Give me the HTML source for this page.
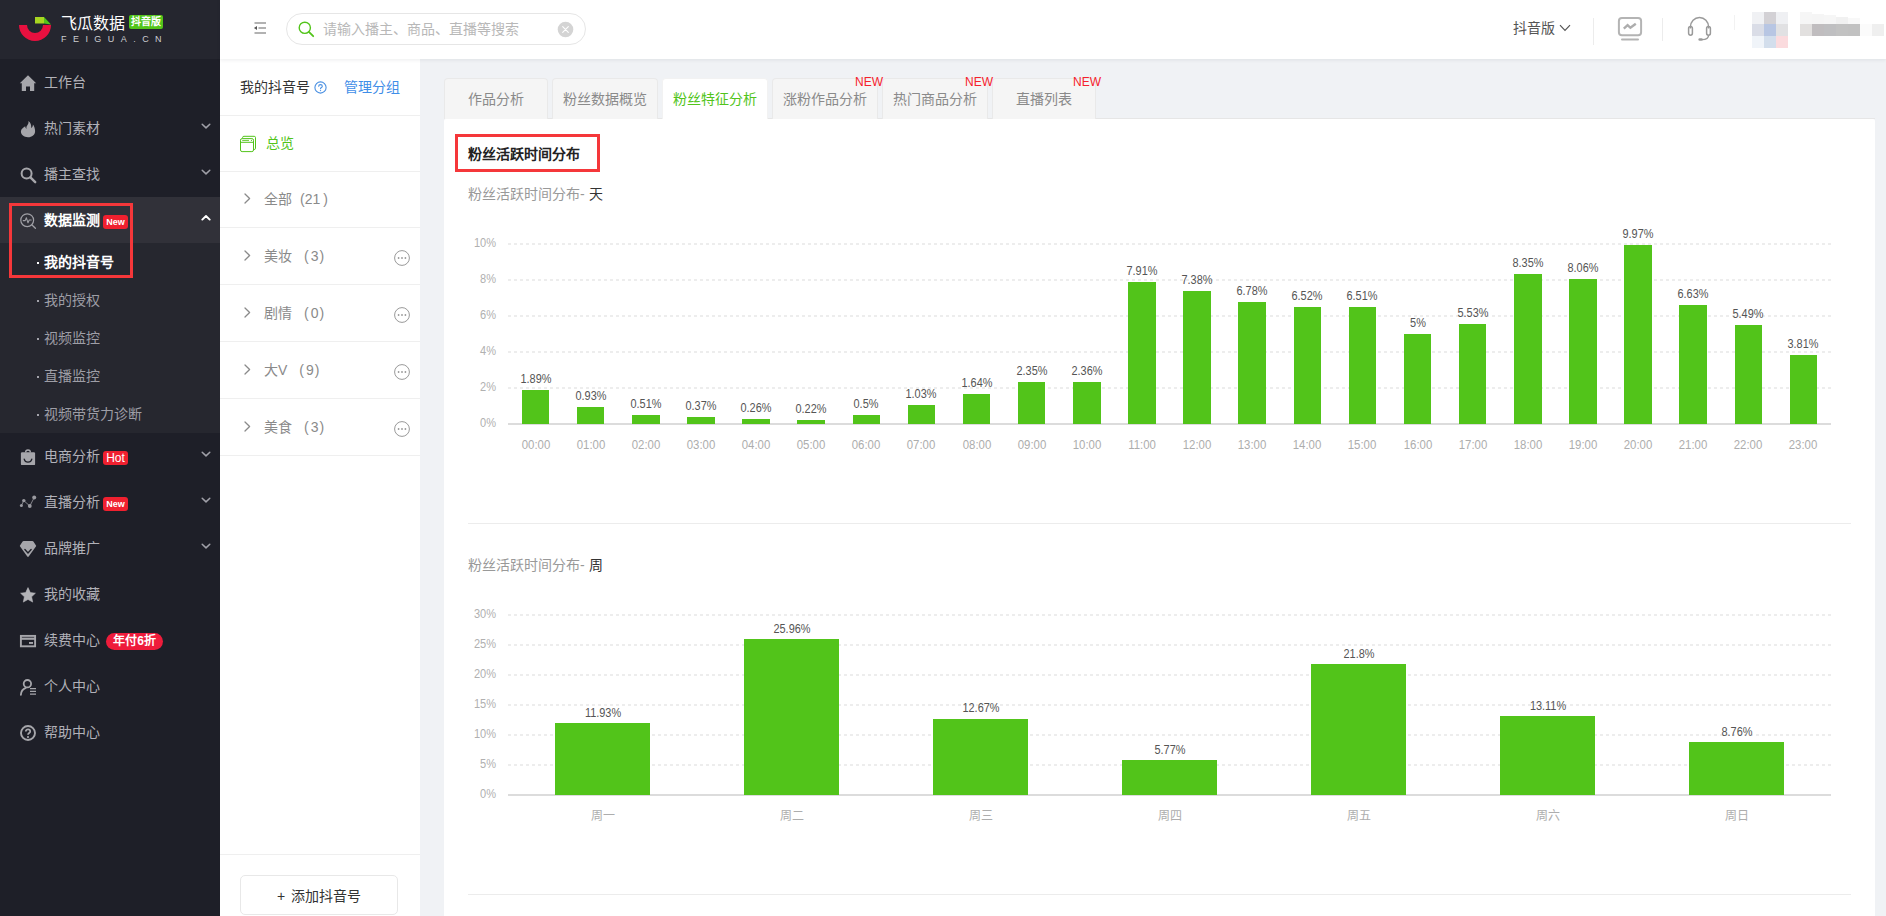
<!DOCTYPE html>
<html lang="zh-CN">
<head>
<meta charset="utf-8">
<title>飞瓜数据</title>
<style>
*{box-sizing:border-box;margin:0;padding:0}
html,body{width:1886px;height:916px;overflow:hidden;background:#f0f2f5;font-family:"Liberation Sans",sans-serif;font-size:14px;color:#333}
.abs{position:absolute}
#page{position:relative;width:1886px;height:916px;overflow:hidden}
/* sidebar */
#side{position:absolute;left:0;top:0;width:220px;height:916px;background:#1e1f28}
#logo{position:absolute;left:0;top:0;width:220px;height:59px;background:#25262f}
.mi{position:absolute;left:0;width:220px;height:46px;color:#b1b1b8;font-size:14px;line-height:46px}
.mi .t{position:absolute;left:44px;top:0;white-space:nowrap}
.mi svg.ic{position:absolute;left:20px;top:16px;width:16px;height:16px}
.mi svg.ch{position:absolute;left:201px;top:18px;width:10px;height:7px}
.mi.act{background:#313139;color:#fff;font-weight:bold}
.sub{position:absolute;left:0;width:220px;height:38px;color:#9e9ea6;font-size:14px;line-height:38px;background:#26272f}
.sub .t{position:absolute;left:44px;top:0;white-space:nowrap}
.sub .d{position:absolute;left:37px;top:19px;width:2px;height:2px;background:#a3a3ab}
.sub.on{color:#fff;font-weight:bold}
.sub.on .d{background:#fff}
.bdg{position:absolute;top:16px;height:14px;line-height:14px;border-radius:3px;background:#f0202f;color:#fff;font-size:10px;font-weight:bold;text-align:center}
/* header */
#head{position:absolute;left:220px;top:0;width:1666px;height:59px;background:#fff;box-shadow:0 1px 4px rgba(0,21,41,.08);z-index:5}
/* mid panel */
#mid{position:absolute;left:220px;top:59px;width:200px;height:857px;background:#fff}
.ln{position:absolute;left:0;width:200px;height:1px;background:#efefef}
.grp{position:absolute;left:44px;font-size:14px;color:#8a8a8a;white-space:nowrap;line-height:20px}
.grp i{font-style:normal}
.cv{position:absolute;left:24px;width:7px;height:11px}
.dots{position:absolute;left:174px;width:16px;height:16px}
/* content */
#main{position:absolute;left:444px;top:119px;width:1431px;height:800px;background:#fff;border-radius:2px}
.tab{position:absolute;top:78px;height:41px;width:104px;background:#f5f5f5;border:1px solid #e9e9e9;border-bottom:none;border-radius:4px 4px 0 0;color:#8a8a8a;font-size:14px;line-height:40px;text-align:center;white-space:nowrap}
.tab.on{background:#fff;color:#52c41a;border-color:#f2f2f2;height:42px}
.new{position:absolute;top:75px;font-size:12px;color:#f5222d;line-height:14px}
.yl{position:absolute;left:446px;width:50px;text-align:right;font-size:12px;line-height:16px;color:#b0b0b0;transform:scaleX(.92);transform-origin:100% 50%}
.gl{position:absolute;height:2px;background:repeating-linear-gradient(90deg,#ededed 0,#ededed 3px,transparent 3px,transparent 6px)}
.ax{position:absolute;height:2px;background:#dcdcdc}
.bar{position:absolute;background:#52c41a}
.vl{position:absolute;width:80px;text-align:center;font-size:12px;line-height:16px;color:#555;white-space:nowrap;transform:scaleX(.91)}
.xl{position:absolute;width:80px;text-align:center;font-size:12px;line-height:16px;color:#adadad;white-space:nowrap}
.xl.num{transform:scaleX(.95)}
.hr{position:absolute;left:468px;width:1383px;height:1px;background:#ececec}
.st{position:absolute;left:468px;font-size:14px;line-height:20px;color:#999;white-space:nowrap}
.st b{font-weight:normal;color:#333}
</style>
</head>
<body>
<div id="page">

<!-- ============ SIDEBAR ============ -->
<div id="side">
  <div id="logo">
    <svg class="abs" style="left:18px;top:15px" width="36" height="28" viewBox="0 0 36 28">
      <path d="M1 10 A16 16 0 0 0 33 10 L25 10 A8 8 0 0 1 9 10 Z" fill="#e8103f"/>
      <path d="M17 2 L26 2 L26 8.5 L17 8.5 Z" fill="#a8d521"/>
      <path d="M26 2 L33 9.5 L26 8.5 Z" fill="#52c41a"/>
    </svg>
    <div class="abs" style="left:61px;top:13px;font-size:16px;line-height:22px;color:#fff;white-space:nowrap">飞瓜数据</div>
    <div class="abs" style="left:129px;top:15px;width:34px;height:14px;border-radius:2px;background:#52c41a;color:#fff;font-size:10px;font-weight:bold;line-height:14px;text-align:center;white-space:nowrap">抖音版</div>
    <div class="abs" style="left:61px;top:34px;font-size:9px;line-height:10px;color:#cdcdd0;letter-spacing:6.45px;white-space:nowrap">FEIGUA.CN</div>
  </div>

  <div class="mi " style="top:59px"><svg class="ic" viewBox="0 0 16 16" style="overflow:visible"><path d="M8 0.3 L16.2 8.2 L14.2 8.2 L14.2 16 L10 16 L10 11.4 L6 11.4 L6 16 L1.8 16 L1.8 8.2 L-0.2 8.2 Z" fill="#a6a6ab"/></svg><span class="t">工作台</span></div>
<div class="mi " style="top:105px"><svg class="ic" viewBox="0 0 16 16" style="overflow:visible"><path d="M8.3 0 C9.2 2.6 7.2 4.2 6.6 5.4 C6.2 6.3 6.3 7.3 6.9 8 C6.0 7.6 5.3 6.7 5.2 5.3 C3.4 6.4 0.9 8.2 0.9 10.6 C0.9 13.8 4 16.2 8 16.2 C12 16.2 15.1 13.8 15.1 10.2 C15.1 7.4 14.2 5 12.9 3.4 C12.9 5.2 12.2 6.5 11.2 7 C11.6 4.2 10.6 1.4 8.3 0 Z" fill="#a6a6ab"/></svg><span class="t">热门素材</span><svg class="ch" viewBox="0 0 10 7"><path d="M1.2 1.2 L5 4.9 L8.8 1.2" fill="none" stroke="#a0a0a8" stroke-width="1.5" stroke-linecap="round" stroke-linejoin="round"/></svg></div>
<div class="mi " style="top:151px"><svg class="ic" viewBox="0 0 16 16" style="overflow:visible"><circle cx="6.6" cy="6.6" r="5" fill="none" stroke="#a6a6ab" stroke-width="2"/><path d="M10.4 10.4 L15.2 15.2" stroke="#a6a6ab" stroke-width="2.4" stroke-linecap="round"/></svg><span class="t">播主查找</span><svg class="ch" viewBox="0 0 10 7"><path d="M1.2 1.2 L5 4.9 L8.8 1.2" fill="none" stroke="#a0a0a8" stroke-width="1.5" stroke-linecap="round" stroke-linejoin="round"/></svg></div>
<div class="mi act" style="top:197px"><svg class="ic" viewBox="0 0 16 16" style="overflow:visible"><circle cx="7.2" cy="7.2" r="6.4" fill="none" stroke="#a0a0a6" stroke-width="1.2"/><path d="M12 12 L15.4 15.2" stroke="#a0a0a6" stroke-width="1.3" stroke-linecap="round"/><path d="M3.2 7.6 L5.2 7.6 L6.4 4.8 L8 9.8 L9.2 7 L11.2 7" fill="none" stroke="#a0a0a6" stroke-width="1.1" stroke-linejoin="round" stroke-linecap="round"/></svg><span class="t">数据监测</span><span class="bdg" style="left:103px;top:18px;width:25px;font-size:9px">New</span><svg class="ch" style="top:17px" viewBox="0 0 10 7"><path d="M1.3 5.6 L5 2 L8.7 5.6" fill="none" stroke="#fff" stroke-width="1.9" stroke-linecap="round" stroke-linejoin="round"/></svg></div>
<div class="sub on" style="top:243px"><span class="d"></span><span class="t">我的抖音号</span></div>
<div class="sub" style="top:281px"><span class="d"></span><span class="t">我的授权</span></div>
<div class="sub" style="top:319px"><span class="d"></span><span class="t">视频监控</span></div>
<div class="sub" style="top:357px"><span class="d"></span><span class="t">直播监控</span></div>
<div class="sub" style="top:395px"><span class="d"></span><span class="t">视频带货力诊断</span></div>
<div class="mi " style="top:433px"><svg class="ic" viewBox="0 0 16 16" style="overflow:visible"><path d="M5.6 3.6 A2.4 2.6 0 0 1 10.4 3.6" fill="none" stroke="#a6a6ab" stroke-width="1.3"/><rect x="0.9" y="3.3" width="14.2" height="12.8" rx="1.2" fill="#a6a6ab"/><path d="M4.2 10.1 A3.9 3.9 0 0 0 11.8 10.1" fill="none" stroke="#1e1f28" stroke-width="1.3" stroke-linecap="round"/></svg><span class="t">电商分析</span><span class="bdg" style="left:103px;top:18px;width:25px;font-size:12px;font-weight:normal">Hot</span><svg class="ch" viewBox="0 0 10 7"><path d="M1.2 1.2 L5 4.9 L8.8 1.2" fill="none" stroke="#a0a0a8" stroke-width="1.5" stroke-linecap="round" stroke-linejoin="round"/></svg></div>
<div class="mi " style="top:479px"><svg class="ic" viewBox="0 0 16 16" style="overflow:visible"><path d="M1.4 10.6 L3.8 5.6 L9.8 11 L14.2 2.6" fill="none" stroke="#8f8f95" stroke-width="0.9"/><circle cx="1.4" cy="10.6" r="1.5" fill="#9a9aa0"/><circle cx="3.8" cy="5.6" r="1.7" fill="#9a9aa0"/><circle cx="9.8" cy="11" r="1.9" fill="#9a9aa0"/><circle cx="14.2" cy="2.6" r="2" fill="#9a9aa0"/></svg><span class="t">直播分析</span><span class="bdg" style="left:103px;top:18px;width:25px;font-size:9px">New</span><svg class="ch" viewBox="0 0 10 7"><path d="M1.2 1.2 L5 4.9 L8.8 1.2" fill="none" stroke="#a0a0a8" stroke-width="1.5" stroke-linecap="round" stroke-linejoin="round"/></svg></div>
<div class="mi " style="top:525px"><svg class="ic" viewBox="0 0 16 16" style="overflow:visible"><path d="M3.6 0 L12.4 0 Q13 0 13.4 0.5 L16 4.4 Q16.4 5 15.9 5.6 L8.7 15.6 Q8 16.4 7.3 15.6 L0.1 5.6 Q-0.4 5 0 4.4 L2.6 0.5 Q3 0 3.6 0 Z" fill="#a6a6ab"/><path d="M4.9 8.6 L8 11.9 L11.1 8.6" fill="none" stroke="#1e1f28" stroke-width="1.4" stroke-linecap="round" stroke-linejoin="round"/></svg><span class="t">品牌推广</span><svg class="ch" viewBox="0 0 10 7"><path d="M1.2 1.2 L5 4.9 L8.8 1.2" fill="none" stroke="#a0a0a8" stroke-width="1.5" stroke-linecap="round" stroke-linejoin="round"/></svg></div>
<div class="mi " style="top:571px"><svg class="ic" viewBox="0 0 16 16" style="overflow:visible"><path d="M8 0.6 L10.3 5.6 L15.4 6.2 L11.6 9.8 L12.7 15.1 L8 12.4 L3.3 15.1 L4.4 9.8 L0.6 6.2 L5.7 5.6 Z" fill="#b4b4b8" stroke="#b4b4b8" stroke-width="0.6" stroke-linejoin="round"/></svg><span class="t">我的收藏</span></div>
<div class="mi " style="top:617px"><svg class="ic" viewBox="0 0 16 16" style="overflow:visible"><rect x="0.9" y="2.9" width="14.2" height="10.4" fill="none" stroke="#a6a6ab" stroke-width="1.9"/><rect x="0.7" y="4.6" width="14.6" height="2.2" fill="#a6a6ab"/><rect x="9" y="9" width="4" height="1.9" fill="#a6a6ab"/></svg><span class="t">续费中心</span><span class="bdg" style="left:106px;top:16px;width:57px;height:17px;line-height:17px;border-radius:9px;font-size:12px;background:#ee1c3b">年付6折</span></div>
<div class="mi " style="top:663px"><svg class="ic" viewBox="0 0 16 16" style="overflow:visible"><circle cx="7.4" cy="4.7" r="3.7" fill="none" stroke="#a6a6ab" stroke-width="1.8"/><path d="M0.9 15.8 C1.1 12.4 3 9.8 5.8 8.8" fill="none" stroke="#a6a6ab" stroke-width="1.8" stroke-linecap="round"/><path d="M10 9.6 H16 M10 12.4 H16 M10 15.2 H16" stroke="#a6a6ab" stroke-width="1.2"/></svg><span class="t">个人中心</span></div>
<div class="mi " style="top:709px"><svg class="ic" viewBox="0 0 16 16" style="overflow:visible"><circle cx="8" cy="8" r="7" fill="none" stroke="#a6a6ab" stroke-width="1.9"/><path d="M5.8 6.4 C5.8 3.7 10.2 3.7 10.2 6.4 C10.2 8 8 8 8 9.8" fill="none" stroke="#a6a6ab" stroke-width="1.8" stroke-linecap="butt"/><circle cx="8" cy="12.1" r="1.05" fill="#a6a6ab"/></svg><span class="t">帮助中心</span></div>

  <!-- red annotation box -->
  <div class="abs" style="left:9px;top:203px;width:124px;height:75px;border:3px solid #f5373a"></div>
</div>

<!-- ============ HEADER ============ -->
<div id="head">
  <svg class="abs" style="left:33px;top:21px" width="14" height="14" viewBox="0 0 14 14"><path d="M1.5 2 H13 M5.5 7 H13 M1.5 12 H13" stroke="#666" stroke-width="1.1"/><path d="M1 7 L4 4.9 L4 9.1 Z" fill="#555"/></svg>
<div class="abs" style="left:66px;top:13px;width:300px;height:32px;border:1px solid #e6e6e6;border-radius:16px;background:#fff"></div>
<svg class="abs" style="left:78px;top:21px" width="17" height="17" viewBox="0 0 17 17"><circle cx="6.8" cy="6.8" r="5.6" fill="none" stroke="#52c41a" stroke-width="1.4"/><path d="M10.9 10.9 L15.2 15.2" stroke="#52c41a" stroke-width="1.8" stroke-linecap="round"/></svg>
<div class="abs" style="left:103px;top:18px;font-size:14px;line-height:22px;color:#b8b8b8;white-space:nowrap">请输入播主、商品、直播等搜索</div>
<svg class="abs" style="left:337px;top:21px" width="17" height="17" viewBox="0 0 17 17"><circle cx="8.5" cy="8.5" r="7.8" fill="#d4d4d4"/><path d="M5.7 5.7 L11.3 11.3 M11.3 5.7 L5.7 11.3" stroke="#fff" stroke-width="1.1" stroke-linecap="round"/></svg>
<div class="abs" style="left:1293px;top:17px;font-size:14px;line-height:22px;color:#555;white-space:nowrap">抖音版</div>
<svg class="abs" style="left:1339px;top:24px" width="12" height="8" viewBox="0 0 12 8"><path d="M1 1.2 L6 6.4 L11 1.2" fill="none" stroke="#555" stroke-width="1.2"/></svg>
<div class="abs" style="left:1373px;top:18px;width:1px;height:27px;background:#ececec"></div>
<svg class="abs" style="left:1397px;top:16px" width="26" height="26" viewBox="0 0 26 26"><rect x="1.9" y="1.9" width="22.2" height="17.4" rx="3" fill="none" stroke="#b4b4b4" stroke-width="2"/><path d="M5 23.6 H21" stroke="#b4b4b4" stroke-width="2" stroke-linecap="round"/><path d="M6.8 12.6 L10.6 9.2 L13.4 11.8 L18.8 7.8" fill="none" stroke="#adadad" stroke-width="2.4" stroke-linejoin="miter" stroke-linecap="butt"/></svg>
<div class="abs" style="left:1442px;top:18px;width:1px;height:23px;background:#ececec"></div>
<svg class="abs" style="left:1466px;top:15px" width="27" height="27" viewBox="0 0 27 27"><path d="M4.4 13.6 V12 A9.1 9.6 0 0 1 22.6 12 V13.6" fill="none" stroke="#9a9a9a" stroke-width="1.5"/><rect x="2.6" y="11.4" width="3.8" height="8.8" rx="1.9" fill="none" stroke="#9a9a9a" stroke-width="1.5"/><rect x="20.6" y="11.4" width="3.8" height="8.8" rx="1.9" fill="none" stroke="#9a9a9a" stroke-width="1.5"/><path d="M22.6 20.2 C22.6 23.4 19.6 24.6 16 24.6" fill="none" stroke="#9a9a9a" stroke-width="1.4"/><rect x="12.4" y="23.2" width="4.4" height="2.6" rx="1.3" fill="#9a9a9a"/></svg>
<div class="abs" style="left:1514px;top:15px;width:1px;height:15px;background:#f2f2f2"></div>
<div class="abs" style="left:1532px;top:12px;width:12px;height:12px;background:#f0f1f4"></div>
<div class="abs" style="left:1544px;top:12px;width:12px;height:12px;background:#d3d1d5"></div>
<div class="abs" style="left:1556px;top:12px;width:12px;height:12px;background:#eff0f3"></div>
<div class="abs" style="left:1532px;top:24px;width:12px;height:12px;background:#dadde7"></div>
<div class="abs" style="left:1544px;top:24px;width:12px;height:12px;background:#b8c6e3"></div>
<div class="abs" style="left:1556px;top:24px;width:12px;height:12px;background:#e1e1e3"></div>
<div class="abs" style="left:1532px;top:36px;width:12px;height:12px;background:#f0f4f9"></div>
<div class="abs" style="left:1544px;top:36px;width:12px;height:12px;background:#d3deec"></div>
<div class="abs" style="left:1556px;top:36px;width:12px;height:12px;background:#fbdbde"></div>
<div class="abs" style="left:1580px;top:24px;width:12px;height:12px;background:#e2e0df"></div>
<div class="abs" style="left:1592px;top:24px;width:12px;height:12px;background:#c0bdbf"></div>
<div class="abs" style="left:1604px;top:24px;width:12px;height:12px;background:#bfbfc1"></div>
<div class="abs" style="left:1616px;top:24px;width:12px;height:12px;background:#c2c2c2"></div>
<div class="abs" style="left:1628px;top:24px;width:12px;height:12px;background:#c1c1c1"></div>
<div class="abs" style="left:1640px;top:24px;width:12px;height:12px;background:#fbfbfb"></div>
<div class="abs" style="left:1652px;top:24px;width:12px;height:12px;background:#efefef"></div>
<div class="abs" style="left:1580px;top:12px;width:12px;height:12px;background:#f6f6f6"></div>
<div class="abs" style="left:1592px;top:14px;width:12px;height:10px;background:#f5f5f5"></div>
<div class="abs" style="left:1604px;top:15px;width:12px;height:9px;background:#f6f6f6"></div>
<div class="abs" style="left:1616px;top:17px;width:12px;height:7px;background:#f1f1f1"></div>
<div class="abs" style="left:1628px;top:18px;width:12px;height:6px;background:#f8f8f8"></div>
</div>

<!-- ============ MIDDLE PANEL ============ -->
<div id="mid">
  <div class="abs" style="left:20px;top:17px;font-size:14px;line-height:22px;color:#333;white-space:nowrap">我的抖音号</div>
<svg class="abs" style="left:94px;top:22px" width="13" height="13" viewBox="0 0 13 13"><circle cx="6.5" cy="6.5" r="5.6" fill="none" stroke="#4a90e2" stroke-width="1.1"/><path d="M4.7 5.2 C4.7 3.1 8.3 3.1 8.3 5.2 C8.3 6.5 6.5 6.5 6.5 7.8" fill="none" stroke="#4a90e2" stroke-width="1.1" stroke-linecap="round"/><circle cx="6.5" cy="9.6" r="0.7" fill="#4a90e2"/></svg>
<div class="abs" style="left:124px;top:17px;font-size:14px;line-height:22px;color:#3f8ee8;white-space:nowrap">管理分组</div>
<div class="ln" style="top:56px"></div>
<div class="ln" style="top:112px"></div>
<div class="ln" style="top:168px"></div>
<div class="ln" style="top:225px"></div>
<div class="ln" style="top:282px"></div>
<div class="ln" style="top:339px"></div>
<div class="ln" style="top:396px"></div>
<svg class="abs" style="left:20px;top:77px;overflow:visible" width="17" height="17" viewBox="0 0 17 17"><path d="M2.6 2.2 V1.6 Q2.6 0.3 3.9 0.3 H14.2 Q15.5 0.3 15.5 1.6 V12.2 Q15.5 13.5 14.2 13.5 H13.9" fill="none" stroke="#52c41a" stroke-width="1"/><rect x="0.5" y="2.6" width="13" height="13" rx="1.6" fill="none" stroke="#52c41a" stroke-width="1"/><path d="M0.5 6.3 H13.5" stroke="#52c41a" stroke-width="1"/><path d="M2.6 4.4 H8.6" stroke="#52c41a" stroke-width="0.9" stroke-linecap="round"/><circle cx="11.4" cy="4.4" r="0.55" fill="#52c41a"/></svg>
<div class="abs" style="left:46px;top:73px;font-size:14px;line-height:22px;color:#52c41a;white-space:nowrap">总览</div>
<svg class="cv" style="top:134px" viewBox="0 0 7 11"><path d="M1 1 L5.6 5.5 L1 10" fill="none" stroke="#8a8a8a" stroke-width="1.3" stroke-linecap="round" stroke-linejoin="round"/></svg>
<div class="grp" style="top:130px">全部<i style="margin-left:8px">(</i><i style="margin-left:0px">21</i><i style="margin-left:3px">)</i></div>
<svg class="cv" style="top:191px" viewBox="0 0 7 11"><path d="M1 1 L5.6 5.5 L1 10" fill="none" stroke="#8a8a8a" stroke-width="1.3" stroke-linecap="round" stroke-linejoin="round"/></svg>
<div class="grp" style="top:187px">美妆<i style="margin-left:12px">(</i><i style="margin-left:2px">3</i><i style="margin-left:1px">)</i></div>
<svg class="dots" style="top:191px" viewBox="0 0 16 16"><circle cx="8" cy="8" r="7.4" fill="none" stroke="#999" stroke-width="1"/><circle cx="4.6" cy="8" r="0.9" fill="#999"/><circle cx="8" cy="8" r="0.9" fill="#999"/><circle cx="11.4" cy="8" r="0.9" fill="#999"/></svg>
<svg class="cv" style="top:248px" viewBox="0 0 7 11"><path d="M1 1 L5.6 5.5 L1 10" fill="none" stroke="#8a8a8a" stroke-width="1.3" stroke-linecap="round" stroke-linejoin="round"/></svg>
<div class="grp" style="top:244px">剧情<i style="margin-left:12px">(</i><i style="margin-left:2px">0</i><i style="margin-left:1px">)</i></div>
<svg class="dots" style="top:248px" viewBox="0 0 16 16"><circle cx="8" cy="8" r="7.4" fill="none" stroke="#999" stroke-width="1"/><circle cx="4.6" cy="8" r="0.9" fill="#999"/><circle cx="8" cy="8" r="0.9" fill="#999"/><circle cx="11.4" cy="8" r="0.9" fill="#999"/></svg>
<svg class="cv" style="top:305px" viewBox="0 0 7 11"><path d="M1 1 L5.6 5.5 L1 10" fill="none" stroke="#8a8a8a" stroke-width="1.3" stroke-linecap="round" stroke-linejoin="round"/></svg>
<div class="grp" style="top:301px">大V<i style="margin-left:12px">(</i><i style="margin-left:2px">9</i><i style="margin-left:1px">)</i></div>
<svg class="dots" style="top:305px" viewBox="0 0 16 16"><circle cx="8" cy="8" r="7.4" fill="none" stroke="#999" stroke-width="1"/><circle cx="4.6" cy="8" r="0.9" fill="#999"/><circle cx="8" cy="8" r="0.9" fill="#999"/><circle cx="11.4" cy="8" r="0.9" fill="#999"/></svg>
<svg class="cv" style="top:362px" viewBox="0 0 7 11"><path d="M1 1 L5.6 5.5 L1 10" fill="none" stroke="#8a8a8a" stroke-width="1.3" stroke-linecap="round" stroke-linejoin="round"/></svg>
<div class="grp" style="top:358px">美食<i style="margin-left:12px">(</i><i style="margin-left:2px">3</i><i style="margin-left:1px">)</i></div>
<svg class="dots" style="top:362px" viewBox="0 0 16 16"><circle cx="8" cy="8" r="7.4" fill="none" stroke="#999" stroke-width="1"/><circle cx="4.6" cy="8" r="0.9" fill="#999"/><circle cx="8" cy="8" r="0.9" fill="#999"/><circle cx="11.4" cy="8" r="0.9" fill="#999"/></svg>
<div class="ln" style="top:795px"></div>
<div class="abs" style="left:20px;top:816px;width:158px;height:40px;border:1px solid #e8e8e8;border-radius:5px;text-align:center;line-height:40px;font-size:14px;color:#333;white-space:nowrap;word-spacing:2px">+ 添加抖音号</div>
</div>

<!-- ============ TABS ============ -->
<div class="abs" style="left:444px;top:118px;width:1431px;height:1px;background:#e6e6e6"></div>
<div class="tab" style="left:444px">作品分析</div>
<div class="tab" style="left:552px;width:106px">粉丝数据概览</div>
<div class="tab on" style="left:662px;width:106px">粉丝特征分析</div>
<div class="tab" style="left:772px;width:106px">涨粉作品分析</div>
<div class="tab" style="left:882px;width:106px">热门商品分析</div>
<div class="tab" style="left:992px;width:104px">直播列表</div>
<div class="new" style="left:855px">NEW</div>
<div class="new" style="left:965px">NEW</div>
<div class="new" style="left:1073px">NEW</div>

<!-- ============ MAIN ============ -->
<div id="main"></div>
<div class="abs" style="left:455px;top:134px;width:145px;height:38px;border:3px solid #f5373a"></div>
<div class="abs" style="left:468px;top:144px;font-size:14px;line-height:20px;font-weight:bold;color:#222;white-space:nowrap">粉丝活跃时间分布</div>
<div class="st" style="top:184px">粉丝活跃时间分布- <b>天</b></div>
<div class="yl" style="top:415px">0%</div>
<div class="yl" style="top:379px">2%</div>
<div class="gl" style="top:387px;left:508px;width:1323px"></div>
<div class="yl" style="top:343px">4%</div>
<div class="gl" style="top:351px;left:508px;width:1323px"></div>
<div class="yl" style="top:307px">6%</div>
<div class="gl" style="top:315px;left:508px;width:1323px"></div>
<div class="yl" style="top:271px">8%</div>
<div class="gl" style="top:279px;left:508px;width:1323px"></div>
<div class="yl" style="top:235px">10%</div>
<div class="gl" style="top:243px;left:508px;width:1323px"></div>
<div class="ax" style="top:423px;left:508px;width:1323px"></div>
<div class="bar" style="left:521.78px;top:389.98px;width:27.56px;height:34.02px"></div>
<div class="vl" style="left:495.56px;top:371px">1.89%</div>
<div class="xl num" style="left:495.56px;top:437px">00:00</div>
<div class="bar" style="left:576.91px;top:407.26px;width:27.56px;height:16.74px"></div>
<div class="vl" style="left:550.69px;top:388px">0.93%</div>
<div class="xl num" style="left:550.69px;top:437px">01:00</div>
<div class="bar" style="left:632.03px;top:414.82px;width:27.56px;height:9.18px"></div>
<div class="vl" style="left:605.81px;top:396px">0.51%</div>
<div class="xl num" style="left:605.81px;top:437px">02:00</div>
<div class="bar" style="left:687.16px;top:417.34px;width:27.56px;height:6.66px"></div>
<div class="vl" style="left:660.94px;top:398px">0.37%</div>
<div class="xl num" style="left:660.94px;top:437px">03:00</div>
<div class="bar" style="left:742.28px;top:419.32px;width:27.56px;height:4.68px"></div>
<div class="vl" style="left:716.06px;top:400px">0.26%</div>
<div class="xl num" style="left:716.06px;top:437px">04:00</div>
<div class="bar" style="left:797.41px;top:420.04px;width:27.56px;height:3.96px"></div>
<div class="vl" style="left:771.19px;top:401px">0.22%</div>
<div class="xl num" style="left:771.19px;top:437px">05:00</div>
<div class="bar" style="left:852.53px;top:415.00px;width:27.56px;height:9.00px"></div>
<div class="vl" style="left:826.31px;top:396px">0.5%</div>
<div class="xl num" style="left:826.31px;top:437px">06:00</div>
<div class="bar" style="left:907.66px;top:405.46px;width:27.56px;height:18.54px"></div>
<div class="vl" style="left:881.44px;top:386px">1.03%</div>
<div class="xl num" style="left:881.44px;top:437px">07:00</div>
<div class="bar" style="left:962.78px;top:394.48px;width:27.56px;height:29.52px"></div>
<div class="vl" style="left:936.56px;top:375px">1.64%</div>
<div class="xl num" style="left:936.56px;top:437px">08:00</div>
<div class="bar" style="left:1017.91px;top:381.70px;width:27.56px;height:42.30px"></div>
<div class="vl" style="left:991.69px;top:363px">2.35%</div>
<div class="xl num" style="left:991.69px;top:437px">09:00</div>
<div class="bar" style="left:1073.03px;top:381.52px;width:27.56px;height:42.48px"></div>
<div class="vl" style="left:1046.81px;top:363px">2.36%</div>
<div class="xl num" style="left:1046.81px;top:437px">10:00</div>
<div class="bar" style="left:1128.16px;top:281.62px;width:27.56px;height:142.38px"></div>
<div class="vl" style="left:1101.94px;top:263px">7.91%</div>
<div class="xl num" style="left:1101.94px;top:437px">11:00</div>
<div class="bar" style="left:1183.28px;top:291.16px;width:27.56px;height:132.84px"></div>
<div class="vl" style="left:1157.06px;top:272px">7.38%</div>
<div class="xl num" style="left:1157.06px;top:437px">12:00</div>
<div class="bar" style="left:1238.41px;top:301.96px;width:27.56px;height:122.04px"></div>
<div class="vl" style="left:1212.19px;top:283px">6.78%</div>
<div class="xl num" style="left:1212.19px;top:437px">13:00</div>
<div class="bar" style="left:1293.53px;top:306.64px;width:27.56px;height:117.36px"></div>
<div class="vl" style="left:1267.31px;top:288px">6.52%</div>
<div class="xl num" style="left:1267.31px;top:437px">14:00</div>
<div class="bar" style="left:1348.66px;top:306.82px;width:27.56px;height:117.18px"></div>
<div class="vl" style="left:1322.44px;top:288px">6.51%</div>
<div class="xl num" style="left:1322.44px;top:437px">15:00</div>
<div class="bar" style="left:1403.78px;top:334.00px;width:27.56px;height:90.00px"></div>
<div class="vl" style="left:1377.56px;top:315px">5%</div>
<div class="xl num" style="left:1377.56px;top:437px">16:00</div>
<div class="bar" style="left:1458.91px;top:324.46px;width:27.56px;height:99.54px"></div>
<div class="vl" style="left:1432.69px;top:305px">5.53%</div>
<div class="xl num" style="left:1432.69px;top:437px">17:00</div>
<div class="bar" style="left:1514.03px;top:273.70px;width:27.56px;height:150.30px"></div>
<div class="vl" style="left:1487.81px;top:255px">8.35%</div>
<div class="xl num" style="left:1487.81px;top:437px">18:00</div>
<div class="bar" style="left:1569.16px;top:278.92px;width:27.56px;height:145.08px"></div>
<div class="vl" style="left:1542.94px;top:260px">8.06%</div>
<div class="xl num" style="left:1542.94px;top:437px">19:00</div>
<div class="bar" style="left:1624.28px;top:244.54px;width:27.56px;height:179.46px"></div>
<div class="vl" style="left:1598.06px;top:226px">9.97%</div>
<div class="xl num" style="left:1598.06px;top:437px">20:00</div>
<div class="bar" style="left:1679.41px;top:304.66px;width:27.56px;height:119.34px"></div>
<div class="vl" style="left:1653.19px;top:286px">6.63%</div>
<div class="xl num" style="left:1653.19px;top:437px">21:00</div>
<div class="bar" style="left:1734.53px;top:325.18px;width:27.56px;height:98.82px"></div>
<div class="vl" style="left:1708.31px;top:306px">5.49%</div>
<div class="xl num" style="left:1708.31px;top:437px">22:00</div>
<div class="bar" style="left:1789.66px;top:355.42px;width:27.56px;height:68.58px"></div>
<div class="vl" style="left:1763.44px;top:336px">3.81%</div>
<div class="xl num" style="left:1763.44px;top:437px">23:00</div>
<div class="hr" style="top:523px"></div>
<div class="st" style="top:555px">粉丝活跃时间分布- <b>周</b></div>
<div class="yl" style="top:786px">0%</div>
<div class="yl" style="top:756px">5%</div>
<div class="gl" style="top:764px;left:508px;width:1323px"></div>
<div class="yl" style="top:726px">10%</div>
<div class="gl" style="top:734px;left:508px;width:1323px"></div>
<div class="yl" style="top:696px">15%</div>
<div class="gl" style="top:704px;left:508px;width:1323px"></div>
<div class="yl" style="top:666px">20%</div>
<div class="gl" style="top:674px;left:508px;width:1323px"></div>
<div class="yl" style="top:636px">25%</div>
<div class="gl" style="top:644px;left:508px;width:1323px"></div>
<div class="yl" style="top:606px">30%</div>
<div class="gl" style="top:614px;left:508px;width:1323px"></div>
<div class="ax" style="top:794px;left:508px;width:1323px"></div>
<div class="bar" style="left:555.25px;top:723.42px;width:94.50px;height:71.58px"></div>
<div class="vl" style="left:562.50px;top:705px">11.93%</div>
<div class="xl " style="left:562.50px;top:808px">周一</div>
<div class="bar" style="left:744.25px;top:639.24px;width:94.50px;height:155.76px"></div>
<div class="vl" style="left:751.50px;top:621px">25.96%</div>
<div class="xl " style="left:751.50px;top:808px">周二</div>
<div class="bar" style="left:933.25px;top:718.98px;width:94.50px;height:76.02px"></div>
<div class="vl" style="left:940.50px;top:700px">12.67%</div>
<div class="xl " style="left:940.50px;top:808px">周三</div>
<div class="bar" style="left:1122.25px;top:760.38px;width:94.50px;height:34.62px"></div>
<div class="vl" style="left:1129.50px;top:742px">5.77%</div>
<div class="xl " style="left:1129.50px;top:808px">周四</div>
<div class="bar" style="left:1311.25px;top:664.20px;width:94.50px;height:130.80px"></div>
<div class="vl" style="left:1318.50px;top:646px">21.8%</div>
<div class="xl " style="left:1318.50px;top:808px">周五</div>
<div class="bar" style="left:1500.25px;top:716.34px;width:94.50px;height:78.66px"></div>
<div class="vl" style="left:1507.50px;top:698px">13.11%</div>
<div class="xl " style="left:1507.50px;top:808px">周六</div>
<div class="bar" style="left:1689.25px;top:742.44px;width:94.50px;height:52.56px"></div>
<div class="vl" style="left:1696.50px;top:724px">8.76%</div>
<div class="xl " style="left:1696.50px;top:808px">周日</div>
<div class="hr" style="top:894px"></div>

</div>
</body>
</html>
